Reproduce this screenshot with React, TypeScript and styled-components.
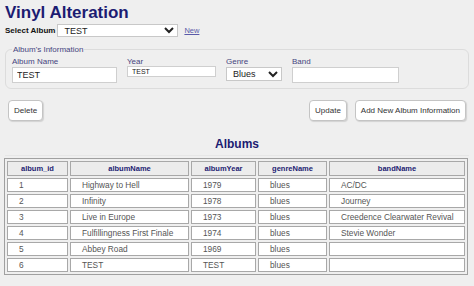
import React from 'react';
import styled, { createGlobalStyle } from 'styled-components';

const GlobalStyle = createGlobalStyle`
  body {
    margin: 0;
    background-color: #efefef;
    font-family: "Liberation Sans", Arial, sans-serif;
  }
`;

const navy = '#1c1c72';
const muted = '#45457e';

const Page = styled.div`
  padding: 2px 5px 0 5px;
  width: 464px;
`;

const Title = styled.h1`
  margin: 0;
  font-size: 17px;
  line-height: 21px;
  font-weight: 700;
  color: ${navy};
`;

const SelectRow = styled.div`
  display: flex;
  align-items: center;
  gap: 2px;
  height: 14px;
`;

const SelectLabel = styled.span`
  font-size: 8px;
  font-weight: 700;
  color: #111;
`;

const Select = styled.select<{ $width: number; $height: number }>`
  width: ${(p) => p.$width}px;
  height: ${(p) => p.$height}px;
  font-family: "Liberation Sans", Arial, sans-serif;
  font-size: 9px;
  color: #222;
  background: white;
  border: 1px solid #c8c8c8;
  padding: 0 2px;
  margin: 0;
`;

const NewLink = styled.a`
  margin-left: 4px;
  font-size: 7.5px;
  color: #5a5aa8;
  text-decoration: underline;
`;

const Fieldset = styled.fieldset`
  margin: 8px 0 0 0;
  padding: 0 6px 5px 6px;
  width: 450px;
  border: 1px solid #dcdcdc;
  border-radius: 6px;
  min-width: 0;
`;

const Legend = styled.legend`
  font-size: 8px;
  color: ${muted};
  padding: 0 1px;
`;

const Fields = styled.div`
  display: flex;
  gap: 10px;
  align-items: flex-start;
  margin-top: 3px;
`;

const Field = styled.label`
  display: flex;
  flex-direction: column;
`;

const FieldLabel = styled.span`
  font-size: 8px;
  line-height: 10px;
  color: ${muted};
`;

const TextInput = styled.input<{ $width: number; $height: number; $small?: boolean }>`
  box-sizing: border-box;
  width: ${(p) => p.$width}px;
  height: ${(p) => p.$height}px;
  margin: ${(p) => (p.$small ? '-1px 0 0 0' : '0')};
  padding: 0 4px;
  border: 1px solid #cfcfcf;
  background: white;
  font-family: "Liberation Sans", Arial, sans-serif;
  font-size: ${(p) => (p.$small ? 7 : 9)}px;
  color: #222;
`;

const ButtonRow = styled.div`
  display: flex;
  justify-content: space-between;
  padding: 0 3px 0 3px;
  width: 458px;
  margin-top: 11px;
`;

const ButtonGroup = styled.div`
  display: flex;
  gap: 8px;
`;

const Button = styled.button`
  height: 21px;
  padding: 0 5px;
  background: white;
  border: 1px solid #c4c4c4;
  border-radius: 4px;
  box-shadow: 1px 1px 1px rgba(0, 0, 0, 0.12);
  font-family: "Liberation Sans", Arial, sans-serif;
  font-size: 8px;
  color: #333;
`;

const Heading = styled.h2`
  margin: 15px 0 0 0;
  padding-bottom: 3px;
  border-bottom: 1px solid #e6e6e6;
  text-align: center;
  font-size: 12px;
  line-height: 16px;
  font-weight: 700;
  color: ${navy};
`;

const Table = styled.table`
  margin: 2px 0 0 -1px;
  width: 464px;
  table-layout: fixed;
  border: 1px solid #a0a0a0;
  border-spacing: 2px;
  background: #efefef;
`;

const HeadCell = styled.th<{ $width?: number }>`
  width: ${(p) => (p.$width ? `${p.$width}px` : 'auto')};
  height: 13px;
  padding: 0;
  border: 1px solid #a8a8a8;
  background: #ececec;
  font-size: 7.5px;
  font-weight: 700;
  color: ${navy};
  text-align: center;
`;

const Cell = styled.td`
  height: 12px;
  padding: 0 0 0 11px;
  border: 1px solid #a8a8a8;
  background: white;
  font-size: 8.3px;
  color: #555;
  white-space: nowrap;
  overflow: hidden;
`;

type Album = {
  id: number;
  name: string;
  year: string;
  genre: string;
  band: string;
};

const albums: Album[] = [
  { id: 1, name: 'Highway to Hell', year: '1979', genre: 'blues', band: 'AC/DC' },
  { id: 2, name: 'Infinity', year: '1978', genre: 'blues', band: 'Journey' },
  { id: 3, name: 'Live in Europe', year: '1973', genre: 'blues', band: 'Creedence Clearwater Revival' },
  { id: 4, name: 'Fulfillingness First Finale', year: '1974', genre: 'blues', band: 'Stevie Wonder' },
  { id: 5, name: 'Abbey Road', year: '1969', genre: 'blues', band: '' },
  { id: 6, name: 'TEST', year: 'TEST', genre: 'blues', band: '' },
];

export default function App() {
  return (
    <Page>
      <GlobalStyle />
      <Title>Vinyl Alteration</Title>

      <SelectRow>
        <SelectLabel>Select Album</SelectLabel>
        <Select $width={121} $height={13} defaultValue="TEST">
          {albums.map((a) => (
            <option key={a.id}>{a.name}</option>
          ))}
        </Select>
        <NewLink href="#">New</NewLink>
      </SelectRow>

      <Fieldset>
        <Legend>Album's Information</Legend>
        <Fields>
          <Field>
            <FieldLabel>Album Name</FieldLabel>
            <TextInput $width={105} $height={16} defaultValue="TEST" />
          </Field>
          <Field>
            <FieldLabel>Year</FieldLabel>
            <TextInput $width={89} $height={11} $small defaultValue="TEST" />
          </Field>
          <Field>
            <FieldLabel>Genre</FieldLabel>
            <Select $width={56} $height={14} defaultValue="Blues">
              <option>Blues</option>
              <option>Rock</option>
              <option>Jazz</option>
            </Select>
          </Field>
          <Field>
            <FieldLabel>Band</FieldLabel>
            <TextInput $width={107} $height={16} defaultValue="" />
          </Field>
        </Fields>
      </Fieldset>

      <ButtonRow>
        <Button>Delete</Button>
        <ButtonGroup>
          <Button>Update</Button>
          <Button>Add New Album Information</Button>
        </ButtonGroup>
      </ButtonRow>

      <Heading>Albums</Heading>

      <Table>
        <thead>
          <tr>
            <HeadCell $width={59}>album_id</HeadCell>
            <HeadCell $width={117}>albumName</HeadCell>
            <HeadCell $width={63}>albumYear</HeadCell>
            <HeadCell $width={67}>genreName</HeadCell>
            <HeadCell>bandName</HeadCell>
          </tr>
        </thead>
        <tbody>
          {albums.map((a) => (
            <tr key={a.id}>
              <Cell>{a.id}</Cell>
              <Cell>{a.name}</Cell>
              <Cell>{a.year}</Cell>
              <Cell>{a.genre}</Cell>
              <Cell>{a.band}</Cell>
            </tr>
          ))}
        </tbody>
      </Table>
    </Page>
  );
}
